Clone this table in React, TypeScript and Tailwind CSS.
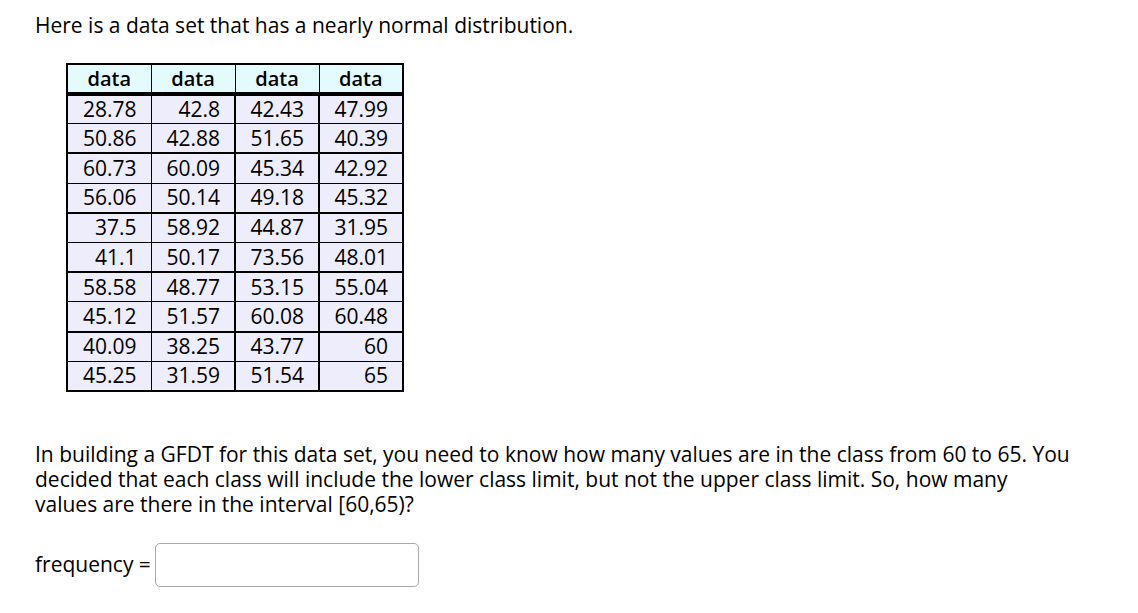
import { useState } from 'react'

const ROWS = [
  ['28.78', '42.8', '42.43', '47.99'],
  ['50.86', '42.88', '51.65', '40.39'],
  ['60.73', '60.09', '45.34', '42.92'],
  ['56.06', '50.14', '49.18', '45.32'],
  ['37.5', '58.92', '44.87', '31.95'],
  ['41.1', '50.17', '73.56', '48.01'],
  ['58.58', '48.77', '53.15', '55.04'],
  ['45.12', '51.57', '60.08', '60.48'],
  ['40.09', '38.25', '43.77', '60'],
  ['45.25', '31.59', '51.54', '65'],
]

export default function App() {
  const [freq, setFreq] = useState('')

  return (
    <div className="min-h-screen bg-white px-[35px] pt-[13px] text-black" style={{ fontFamily: '"Open Sans", sans-serif' }}>
      <p className="text-[21px] leading-[25px]">Here is a data set that has a nearly normal distribution.</p>

      {/* data table */}
      <table className="ml-[31px] mt-[25px] border-collapse border-2 border-black text-[21px]">
        <thead>
          <tr className="bg-[#e3fbfd]">
            {[0, 1, 2, 3].map(i => (
              <th key={i} className={`h-[30px] w-[84px] border-b-[4px] border-black p-0 text-center text-[20px] font-semibold leading-none ${i < 3 ? 'border-r' : ''}`}>
                data
              </th>
            ))}
          </tr>
        </thead>
        <tbody>
          {ROWS.map((row, r) => (
            <tr key={r} className={`bg-[#ededfb] border-black ${r % 2 === 1 ? 'border-b-2' : 'border-b'}`}>
              {row.map((v, c) => (
                <td key={c} className={`h-[29.7px] border-black p-0 pr-[14px] text-right leading-none ${c < 3 ? (c === 0 ? 'border-r' : 'border-r-2') : ''}`}>
                  {v}
                </td>
              ))}
            </tr>
          ))}
        </tbody>
      </table>

      <p className="mt-[50px] max-w-[1037px] text-[21px] leading-[25px]">
        In building a GFDT for this data set, you need to know how many values are in the class from 60 to 65. You decided that each class will include the lower class limit, but not the upper class limit. So, how many values are there in the interval [60,65)?
      </p>

      <div className="mt-[26px] flex items-center gap-[4px] text-[21px]">
        <span>frequency =</span>
        <input
          value={freq}
          onChange={e => setFreq(e.target.value)}
          className="h-[44px] w-[264px] rounded-[5px] border border-[#a9a9a9] bg-white px-2 outline-none"
        />
      </div>
    </div>
  )
}
